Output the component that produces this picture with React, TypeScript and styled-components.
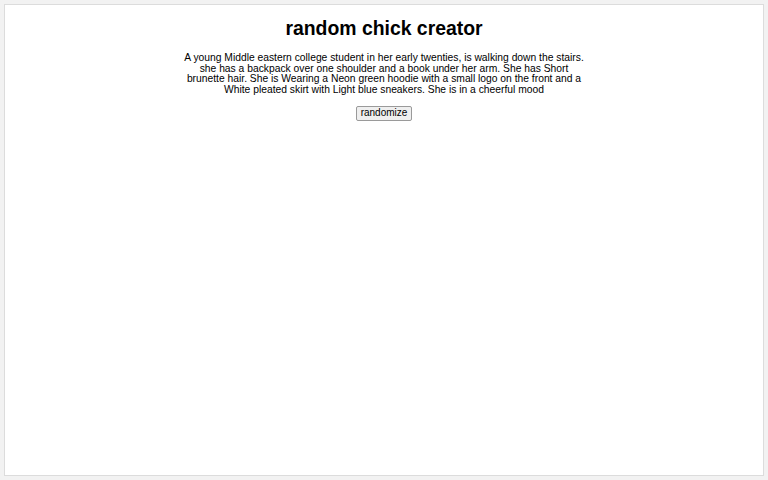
import React, { useCallback, useState } from 'react';
import styled, { createGlobalStyle } from 'styled-components';

const GlobalStyle = createGlobalStyle`
  html, body {
    margin: 0;
    padding: 0;
    background: #f2f2f2;
    font-family: "Liberation Sans", Arial, sans-serif;
  }
`;

const Frame = styled.div`
  box-sizing: border-box;
  margin: 4px;
  height: 472px;
  background: #ffffff;
  border: 1px solid #dcdcdc;
  display: flex;
  flex-direction: column;
  align-items: center;
  padding-top: 12px;
`;

const Title = styled.h1`
  margin: 0 0 13px;
  font-size: 19.4px;
  line-height: 23px;
  font-weight: 700;
  color: #000;
`;

const Description = styled.p`
  margin: 0 0 10px;
  max-width: 402px;
  font-size: 10.3px;
  line-height: 10.7px;
  text-align: center;
  color: #000;
`;

const RandomButton = styled.button`
  font-family: "Liberation Sans", Arial, sans-serif;
  font-size: 10px;
  line-height: 12px;
  padding: 0 4px;
  height: 15px;
  color: #000;
  background: #efefef;
  border: 1px solid #9a9a9a;
  border-radius: 2px;
  cursor: pointer;
`;

const ages = ['early twenties', 'late twenties', 'mid thirties'];
const hair = ['Short brunette', 'Long blonde', 'Curly red'];
const tops = ['Neon green hoodie', 'Navy blue sweater', 'White linen shirt'];
const bottoms = ['White pleated skirt', 'Black denim jeans', 'Grey cargo pants'];
const shoes = ['Light blue sneakers', 'Brown leather boots', 'Red canvas shoes'];
const moods = ['cheerful', 'thoughtful', 'relaxed'];

const pick = (list: string[]) => list[Math.floor(Math.random() * list.length)];

const build = () =>
  `A young Middle eastern college student in her ${pick(ages)}, is walking down the stairs. she has a backpack over one shoulder and a book under her arm. She has ${pick(hair)} hair. She is Wearing a ${pick(tops)} with a small logo on the front and a ${pick(bottoms)} with ${pick(shoes)}. She is in a ${pick(moods)} mood`;

const initial =
  'A young Middle eastern college student in her early twenties, is walking down the stairs. she has a backpack over one shoulder and a book under her arm. She has Short brunette hair. She is Wearing a Neon green hoodie with a small logo on the front and a White pleated skirt with Light blue sneakers. She is in a cheerful mood';

const App = () => {
  const [text, setText] = useState(initial);

  const randomize = useCallback(() => setText(build()), []);

  return (
    <>
      <GlobalStyle />
      <Frame>
        <Title>random chick creator</Title>
        <Description>{text}</Description>
        <RandomButton type="button" onClick={randomize}>
          randomize
        </RandomButton>
      </Frame>
    </>
  );
};

export default App;
